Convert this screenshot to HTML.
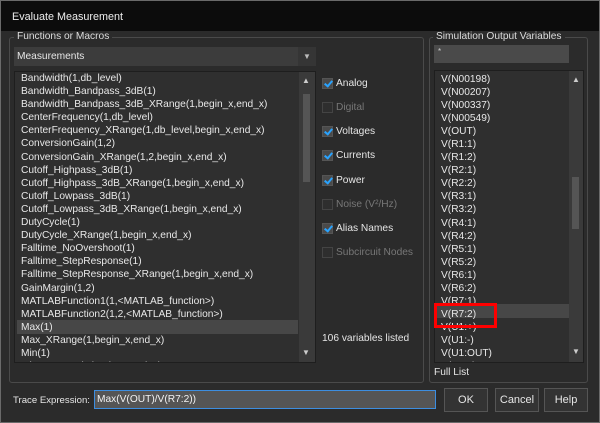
<!DOCTYPE html>
<html><head><meta charset="utf-8"><style>
*{margin:0;padding:0;box-sizing:border-box}
body{width:600px;height:423px;background:#2b2b2b;font-family:"Liberation Sans",sans-serif;font-size:10.2px;color:#e6e6e6;position:relative;overflow:hidden}
.a{position:absolute;white-space:nowrap}
#frame{left:0;top:0;width:600px;height:423px;border:1px solid #6a6a6a}
#title{left:1px;top:1px;width:598px;height:30px;background:#0c0c0c}
.grp{border:1px solid #4a4a4a;border-radius:3px}
.lbl{background:#2b2b2b;padding:0 3px;color:#ddd}
.list{background:#2f2f2f;border:1px solid #1e1e1e}
.it{position:absolute;left:6px;line-height:13px;color:#e8e8e8}
.sb{background:#3a3a3a}
.cb{position:absolute;left:322px;width:11px;height:11px;background:#4a4a4a;border:1px solid #555}
.cb.on::after{content:"";position:absolute;left:3px;top:0px;width:3px;height:6px;border:solid #29a3ff;border-width:0 2px 2px 0;transform:rotate(40deg)}
.cb.off{background:#2e2e2e;border-color:#444}
.ct{position:absolute;left:336px}
.dis{color:#777}
.btn{position:absolute;top:388px;height:24px;background:#333;border:1px solid #555;text-align:center;line-height:22px;font-size:11px}
</style></head><body>
<div class="a" id="title"></div>
<div class="a" style="left:12px;top:11px;font-size:10.8px;color:#eee">Evaluate Measurement</div>
<div class="a" id="frame"></div>

<div class="a grp" style="left:9px;top:37px;width:415px;height:346px"></div>
<div class="a lbl" style="left:14px;top:31px">Functions or Macros</div>
<div class="a" style="left:14px;top:47px;width:302px;height:19px;background:#3c3c3c"></div>
<div class="a" style="left:17px;top:51px">Measurements</div>
<div class="a" style="left:298px;top:47px;width:18px;height:19px;background:#353535;color:#bbb;font-size:8px;text-align:center;line-height:19px">▼</div>

<div class="a list" style="left:14px;top:71px;width:302px;height:292px;overflow:hidden">
<div class="a" style="left:2px;top:248px;width:281px;height:14px;background:#474747"></div>
<div class="it" style="top:0px;line-height:13.1px">Bandwidth(1,db_level)<br>Bandwidth_Bandpass_3dB(1)<br>Bandwidth_Bandpass_3dB_XRange(1,begin_x,end_x)<br>CenterFrequency(1,db_level)<br>CenterFrequency_XRange(1,db_level,begin_x,end_x)<br>ConversionGain(1,2)<br>ConversionGain_XRange(1,2,begin_x,end_x)<br>Cutoff_Highpass_3dB(1)<br>Cutoff_Highpass_3dB_XRange(1,begin_x,end_x)<br>Cutoff_Lowpass_3dB(1)<br>Cutoff_Lowpass_3dB_XRange(1,begin_x,end_x)<br>DutyCycle(1)<br>DutyCycle_XRange(1,begin_x,end_x)<br>Falltime_NoOvershoot(1)<br>Falltime_StepResponse(1)<br>Falltime_StepResponse_XRange(1,begin_x,end_x)<br>GainMargin(1,2)<br>MATLABFunction1(1,&lt;MATLAB_function&gt;)<br>MATLABFunction2(1,2,&lt;MATLAB_function&gt;)<br>Max(1)<br>Max_XRange(1,begin_x,end_x)<br>Min(1)<br>Min_XRange(1,begin_x,end_x)</div>
<div class="a sb" style="left:284px;top:0;width:16px;height:290px"></div>
<div class="a" style="left:288px;top:22px;width:7px;height:88px;background:#555"></div>
<div class="a" style="left:287px;top:4px;color:#ccc;font-size:8px">▲</div>
<div class="a" style="left:287px;top:276px;color:#ccc;font-size:8px">▼</div>
</div>

<div class="cb on" style="top:78px"></div><div class="ct" style="top:78px">Analog</div>
<div class="cb off" style="top:102px"></div><div class="ct dis" style="top:102px">Digital</div>
<div class="cb on" style="top:126px"></div><div class="ct" style="top:126px">Voltages</div>
<div class="cb on" style="top:150px"></div><div class="ct" style="top:150px">Currents</div>
<div class="cb on" style="top:175px"></div><div class="ct" style="top:175px">Power</div>
<div class="cb off" style="top:199px"></div><div class="ct dis" style="top:199px">Noise (V²/Hz)</div>
<div class="cb on" style="top:223px"></div><div class="ct" style="top:223px">Alias Names</div>
<div class="cb off" style="top:247px"></div><div class="ct dis" style="top:247px">Subcircuit Nodes</div>
<div class="a" style="left:322px;top:333px">106 variables listed</div>

<div class="a grp" style="left:429px;top:37px;width:159px;height:346px"></div>
<div class="a lbl" style="left:433px;top:31px">Simulation Output Variables</div>
<div class="a" style="left:434px;top:45px;width:135px;height:18px;background:#4a4a4a"></div>
<div class="a" style="left:438px;top:47px;font-size:8px;color:#ccc">*</div>
<div class="a list" style="left:434px;top:70px;width:150px;height:293px;overflow:hidden">
<div class="a" style="left:0;top:233px;width:137px;height:14px;background:#474747"></div>
<div class="it" style="top:2px;line-height:13.05px">V(N00198)<br>V(N00207)<br>V(N00337)<br>V(N00549)<br>V(OUT)<br>V(R1:1)<br>V(R1:2)<br>V(R2:1)<br>V(R2:2)<br>V(R3:1)<br>V(R3:2)<br>V(R4:1)<br>V(R4:2)<br>V(R5:1)<br>V(R5:2)<br>V(R6:1)<br>V(R6:2)<br>V(R7:1)<br>V(R7:2)<br>V(U1:+)<br>V(U1:-)<br>V(U1:OUT)<br>V(V1:+)</div>
<div class="a sb" style="left:134px;top:0;width:16px;height:291px"></div>
<div class="a" style="left:137px;top:106px;width:7px;height:52px;background:#555"></div>
<div class="a" style="left:137px;top:4px;color:#ccc;font-size:8px">▲</div>
<div class="a" style="left:137px;top:276px;color:#ccc;font-size:8px">▼</div>
</div>
<div class="a" style="left:434px;top:303px;width:63px;height:25px;border:3px solid #ff0000"></div>
<div class="a" style="left:434px;top:367px">Full List</div>

<div class="a" style="left:13px;top:395px;font-size:9.6px">Trace Expression:</div>
<div class="a" style="left:94px;top:390px;width:342px;height:19px;background:#555;border:1px solid #3d8ee0"></div>
<div class="a" style="left:97px;top:394px;color:#f2f2f2">Max(V(OUT)/V(R7:2))</div>
<div class="btn" style="left:444px;width:44px">OK</div>
<div class="btn" style="left:495px;width:44px">Cancel</div>
<div class="btn" style="left:544px;width:44px">Help</div>
</body></html>
